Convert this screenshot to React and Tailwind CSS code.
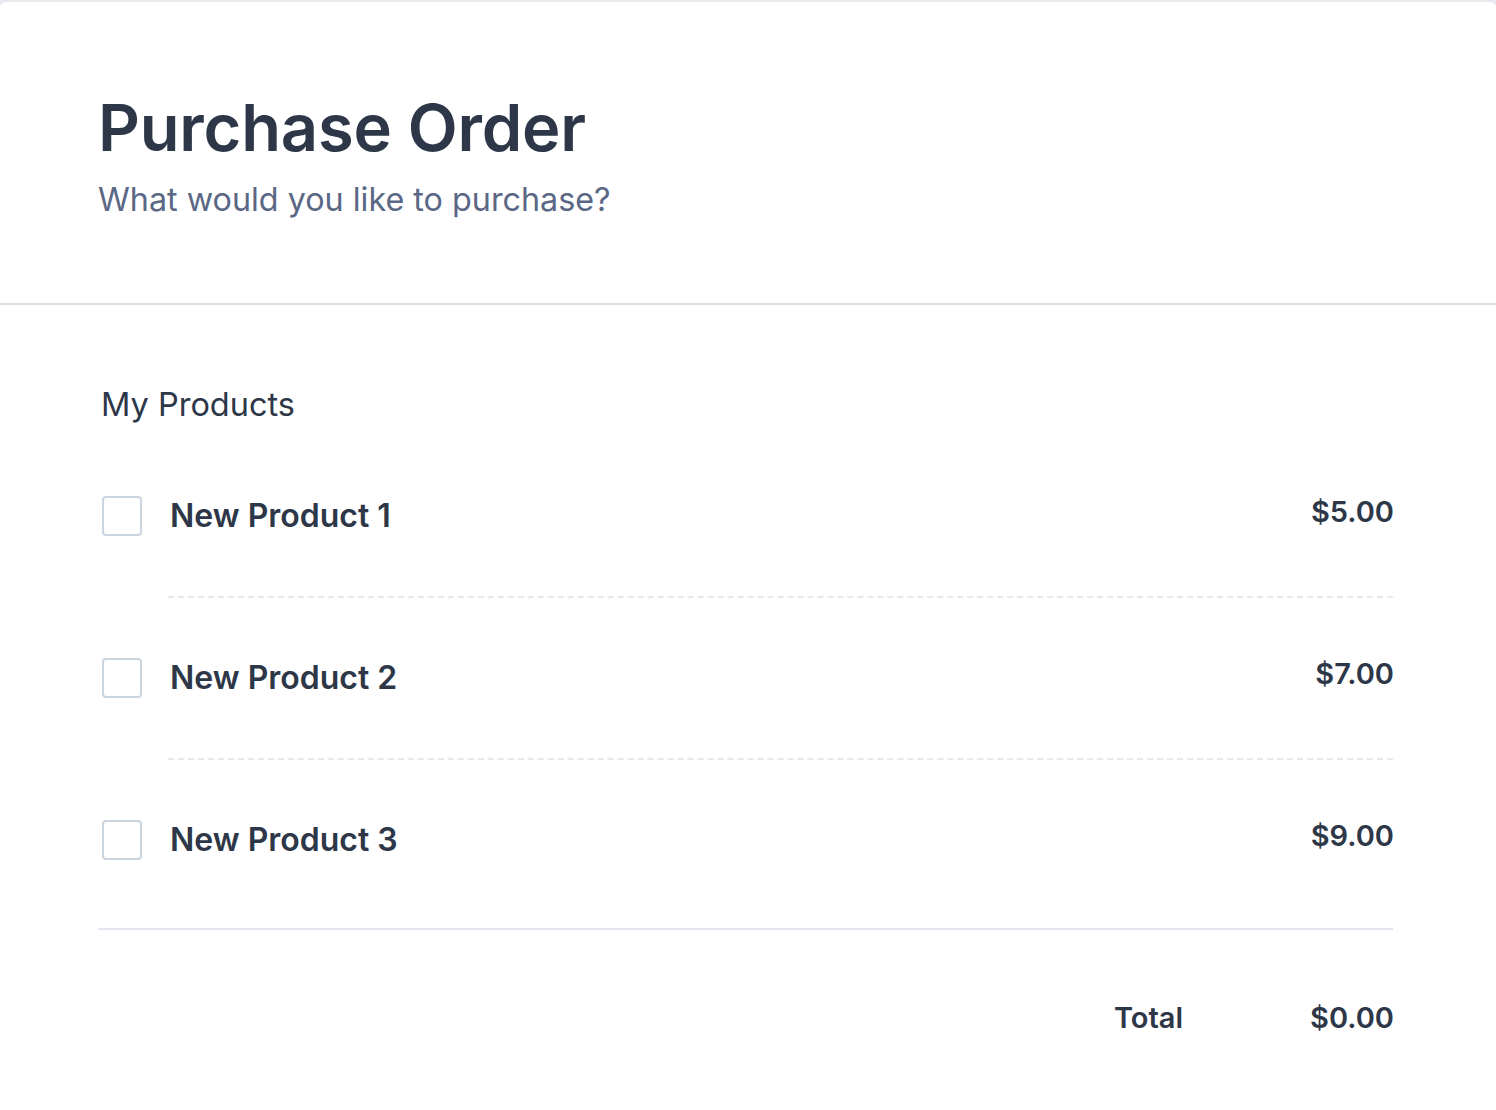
import React, { useState } from "react";

const products = [
  { id: 1, name: "New Product 1", price: 5 },
  { id: 2, name: "New Product 2", price: 7 },
  { id: 3, name: "New Product 3", price: 9 },
];

function App() {
  const [selected, setSelected] = useState([]);

  const toggle = (id) => {
    setSelected((prev) =>
      prev.includes(id) ? prev.filter((x) => x !== id) : [...prev, id]
    );
  };

  const total = products
    .filter((p) => selected.includes(p.id))
    .reduce((sum, p) => sum + p.price, 0);

  return (
    <div
      className="min-h-screen bg-[#e9e9f0] pt-[2px]"
      style={{ fontFamily: "Inter, 'Noto Sans', sans-serif" }}
    >
      <div className="bg-white rounded-t-md min-h-[1108px]">
        {/* Header */}
        <div className="pl-[98px] pr-[103px] pt-[88px] pb-[83px] border-b-2 border-[#dcdbe6]">
          <h1 className="text-[65px] leading-[76px] font-semibold text-[#2d3748] tracking-[-0.2px]">
            Purchase Order
          </h1>
          <p className="text-[32.3px] leading-[40px] text-[#5a6785] mt-[14px]">
            What would you like to purchase?
          </p>
        </div>

        {/* Products */}
        <div className="pl-[98px] pr-[103px] pt-[82px]">
          <h2 className="text-[32.5px] leading-[36px] text-[#2d3748] pl-[3px]">
            My Products
          </h2>

          <div className="mt-[51px]">
            {products.map((p, i) => (
              <div key={p.id}>
                <div className="flex items-center h-[84px]">
                  <button
                    type="button"
                    onClick={() => toggle(p.id)}
                    className="w-[40px] h-[40px] ml-[4px] border-2 border-[#cbd5e0] rounded-[4px] flex items-center justify-center shrink-0"
                  >
                    {selected.includes(p.id) && (
                      <svg className="w-6 h-6 text-[#2d3748]" viewBox="0 0 24 24" fill="none" stroke="currentColor" strokeWidth={3}>
                        <path strokeLinecap="round" strokeLinejoin="round" d="M5 13l4 4L19 7" />
                      </svg>
                    )}
                  </button>
                  <span className="ml-[28px] text-[32px] font-semibold text-[#2d3748]">
                    {p.name}
                  </span>
                  <span className="ml-auto mb-[8px] mr-[-1px] text-[29px] font-semibold text-[#2d3748]">
                    ${p.price.toFixed(2)}
                  </span>
                </div>
                {i < products.length - 1 && (
                  <div className="ml-[70px] my-[38px] border-t-2 border-dashed border-[#e8e9ee]" />
                )}
              </div>
            ))}
          </div>

          <div className="mt-[46px] border-t-2 border-[#e2e6ee]" />

          <div className="flex items-center justify-end pt-[66px] pb-[40px] mr-[-1px]">
            <span className="text-[29px] font-semibold text-[#2d3748]">Total</span>
            <span className="ml-[127px] text-[29px] font-semibold text-[#2d3748]">
              ${total.toFixed(2)}
            </span>
          </div>
        </div>
      </div>
    </div>
  );
}

export default App;
